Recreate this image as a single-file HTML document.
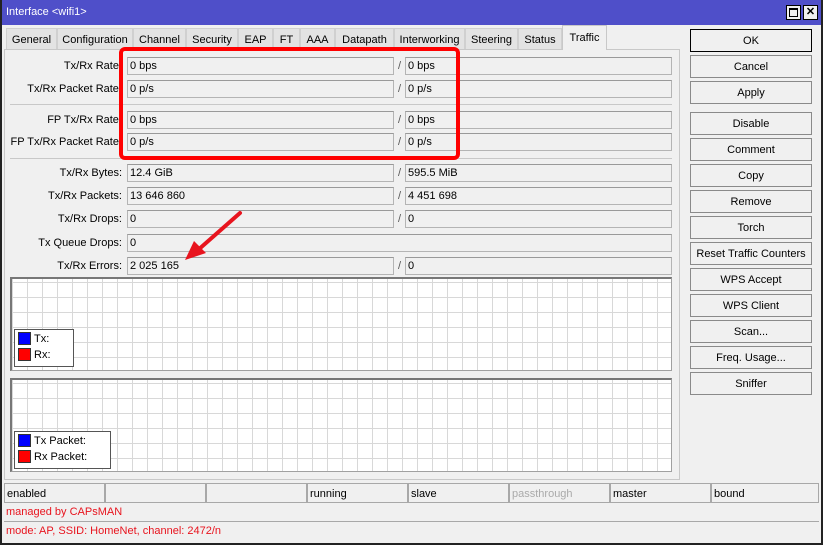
<!DOCTYPE html>
<html><head><meta charset="utf-8"><style>
*{box-sizing:border-box;margin:0;padding:0}
body{width:823px;height:545px;background:#f0f0f0;font-family:"Liberation Sans",sans-serif;font-size:11px;color:#000;position:relative;overflow:hidden}
.a{position:absolute}
.win{left:0;top:0;width:823px;height:545px;border:2px solid #222;border-top:none}
.title{left:0;top:0;width:823px;height:25px;background:#4f4fc9;color:#fff;padding:6px 0 0 6px;font-size:11px}
.tb{top:5px;width:15px;height:15px;background:#f0f0f0;border:1px solid #000}
.tab{top:28px;height:21px;background:#e3e3e3;border:1px solid #d0d0d0;border-bottom:none;text-align:center;padding-top:5px;white-space:nowrap}
.panel{left:4px;top:49px;width:676px;height:431px;border:1px solid #c8c8c8;background:#f0f0f0}
.lbl{text-align:right;width:122px;left:0;white-space:nowrap}
.f{height:18px;border:1px solid #b4b4b4;border-top-color:#999;background:#f0f0f0;padding:2px 0 0 2px;white-space:nowrap}
.sl{color:#555}
.btn{left:690px;width:122px;height:23px;border:1px solid #8a8a8a;background:#f0f0f0;text-align:center;padding-top:5px}
.sep{left:10px;width:662px;height:1px;background:#c8c8c8}
.graph{left:10px;width:662px;border:1px solid #a0a0a0;border-left:2px solid #777;border-top:2px solid #777;background-color:#fff;background-image:linear-gradient(#d8d8d8 1px,transparent 1px),linear-gradient(90deg,#d8d8d8 1px,transparent 1px);background-size:15px 15px;background-position:0 3px}
.leg{background:#fff;border:1px solid #555;padding:2px 3px}
.leg div{height:16px;line-height:15px}
.sq{display:inline-block;width:13px;height:13px;border:1px solid #333;vertical-align:-3px;margin-right:3px}
.sc{top:483px;height:20px;border:1px solid #a8a8a8;padding:4px 0 0 2px;white-space:nowrap}
.line{left:4px;width:815px;height:1px;background:#a8a8a8}
.red{color:#e8141e}
</style></head><body>
<div class="a title">Interface &lt;wifi1&gt;</div>
<div class="a tb" style="left:786px"><div class="a" style="left:2px;top:2px;width:9px;height:9px;border:1px solid #000;border-top-width:2px"></div></div>
<div class="a tb" style="left:803px;text-align:center;font-weight:bold;font-size:11px;line-height:13px">✕</div>
<div class="a win"></div>

<div class="a tab" style="left:6px;width:51px">General</div>
<div class="a tab" style="left:57px;width:76px">Configuration</div>
<div class="a tab" style="left:133px;width:53px">Channel</div>
<div class="a tab" style="left:186px;width:52px">Security</div>
<div class="a tab" style="left:238px;width:35px">EAP</div>
<div class="a tab" style="left:273px;width:27px">FT</div>
<div class="a tab" style="left:300px;width:35px">AAA</div>
<div class="a tab" style="left:335px;width:59px">Datapath</div>
<div class="a tab" style="left:394px;width:71px">Interworking</div>
<div class="a tab" style="left:465px;width:53px">Steering</div>
<div class="a tab" style="left:518px;width:44px">Status</div>
<div class="a panel"></div>
<div class="a tab" style="left:562px;top:25px;width:45px;height:25px;background:#f0f0f0;border-color:#c8c8c8;padding-top:6px">Traffic</div>

<div class="a lbl" style="top:60px">Tx/Rx Rate:</div><div class="a f" style="left:127px;top:57px;width:267px">0 bps</div><div class="a sl" style="left:398px;top:60px">/</div><div class="a f" style="left:405px;top:57px;width:267px">0 bps</div>
<div class="a lbl" style="top:83px">Tx/Rx Packet Rate:</div><div class="a f" style="left:127px;top:80px;width:267px">0 p/s</div><div class="a sl" style="left:398px;top:83px">/</div><div class="a f" style="left:405px;top:80px;width:267px">0 p/s</div>
<div class="a sep" style="top:104px"></div>
<div class="a lbl" style="top:114px">FP Tx/Rx Rate:</div><div class="a f" style="left:127px;top:111px;width:267px">0 bps</div><div class="a sl" style="left:398px;top:114px">/</div><div class="a f" style="left:405px;top:111px;width:267px">0 bps</div>
<div class="a lbl" style="top:136px">FP Tx/Rx Packet Rate:</div><div class="a f" style="left:127px;top:133px;width:267px">0 p/s</div><div class="a sl" style="left:398px;top:136px">/</div><div class="a f" style="left:405px;top:133px;width:267px">0 p/s</div>
<div class="a sep" style="top:158px"></div>
<div class="a lbl" style="top:167px">Tx/Rx Bytes:</div><div class="a f" style="left:127px;top:164px;width:267px">12.4 GiB</div><div class="a sl" style="left:398px;top:167px">/</div><div class="a f" style="left:405px;top:164px;width:267px">595.5 MiB</div>
<div class="a lbl" style="top:190px">Tx/Rx Packets:</div><div class="a f" style="left:127px;top:187px;width:267px">13 646 860</div><div class="a sl" style="left:398px;top:190px">/</div><div class="a f" style="left:405px;top:187px;width:267px">4 451 698</div>
<div class="a lbl" style="top:213px">Tx/Rx Drops:</div><div class="a f" style="left:127px;top:210px;width:267px">0</div><div class="a sl" style="left:398px;top:213px">/</div><div class="a f" style="left:405px;top:210px;width:267px">0</div>
<div class="a lbl" style="top:237px">Tx Queue Drops:</div><div class="a f" style="left:127px;top:234px;width:545px">0</div>
<div class="a lbl" style="top:260px">Tx/Rx Errors:</div><div class="a f" style="left:127px;top:257px;width:267px">2 025 165</div><div class="a sl" style="left:398px;top:260px">/</div><div class="a f" style="left:405px;top:257px;width:267px">0</div>

<div class="a graph" style="top:277px;height:94px"></div>
<div class="a leg" style="left:14px;top:329px;width:60px;height:38px"><div><span class="sq" style="background:#00f"></span>Tx:</div><div><span class="sq" style="background:#f00"></span>Rx:</div></div>
<div class="a graph" style="top:378px;height:94px"></div>
<div class="a leg" style="left:14px;top:431px;width:97px;height:38px"><div><span class="sq" style="background:#00f"></span>Tx Packet:</div><div><span class="sq" style="background:#f00"></span>Rx Packet:</div></div>

<div class="a" style="left:119px;top:47px;width:341px;height:113px;border:4px solid #f00;border-radius:6px"></div>
<svg class="a" style="left:180px;top:205px" width="70" height="60"><line x1="60" y1="8" x2="18" y2="45" stroke="#e8141e" stroke-width="4" stroke-linecap="round"/><polygon points="5,55 14,36 26,48" fill="#e8141e"/></svg>

<div class="a btn" style="top:29px;border:1px solid #000">OK</div>
<div class="a btn" style="top:55px">Cancel</div>
<div class="a btn" style="top:81px">Apply</div>
<div class="a btn" style="top:112px">Disable</div>
<div class="a btn" style="top:138px">Comment</div>
<div class="a btn" style="top:164px">Copy</div>
<div class="a btn" style="top:190px">Remove</div>
<div class="a btn" style="top:216px">Torch</div>
<div class="a btn" style="top:242px">Reset Traffic Counters</div>
<div class="a btn" style="top:268px">WPS Accept</div>
<div class="a btn" style="top:294px">WPS Client</div>
<div class="a btn" style="top:320px">Scan...</div>
<div class="a btn" style="top:346px">Freq. Usage...</div>
<div class="a btn" style="top:372px">Sniffer</div>

<div class="a sc" style="left:4px;width:101px">enabled</div>
<div class="a sc" style="left:105px;width:101px"></div>
<div class="a sc" style="left:206px;width:101px"></div>
<div class="a sc" style="left:307px;width:101px">running</div>
<div class="a sc" style="left:408px;width:101px">slave</div>
<div class="a sc" style="left:509px;width:101px;color:#aaa">passthrough</div>
<div class="a sc" style="left:610px;width:101px">master</div>
<div class="a sc" style="left:711px;width:108px">bound</div>
<div class="a red" style="left:6px;top:506px">managed by CAPsMAN</div>
<div class="a line" style="top:521px"></div>
<div class="a red" style="left:6px;top:525px">mode: AP, SSID: HomeNet, channel: 2472/n</div>
</body></html>
